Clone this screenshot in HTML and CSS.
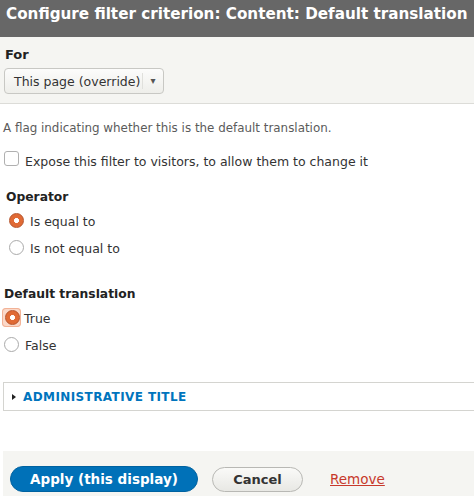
FILE: index.html
```html
<!DOCTYPE html>
<html>
<head>
<meta charset="utf-8">
<link rel="stylesheet" href="styles.css">
</head>
<body>
<div class="dialog">
  <div class="titlebar"><h1 class="title">Configure filter criterion: Content: Default translation</h1></div>
  <div class="override">
    <div class="label">For</div>
    <div class="select"><span class="select-text">This page (override)</span><span class="select-arrow">▾</span></div>
  </div>
  <div class="content">
    <p class="desc">A flag indicating whether this is the default translation.</p>
    <label class="check-row"><span class="checkbox"></span><span>Expose this filter to visitors, to allow them to change it</span></label>
    <div class="group op">
      <div class="label">Operator</div>
      <label class="radio-row"><span class="radio checked"></span><span>Is equal to</span></label>
      <label class="radio-row"><span class="radio"></span><span>Is not equal to</span></label>
    </div>
    <div class="group dt">
      <div class="label">Default translation</div>
      <label class="radio-row"><span class="focus"><span class="radio checked"></span></span><span>True</span></label>
      <label class="radio-row"><span class="radio"></span><span>False</span></label>
    </div>
    <div class="details"><span class="tri"></span><span class="summary">Administrative title</span></div>
  </div>
  <div class="footer">
    <span class="btn primary">Apply (this display)</span>
    <span class="btn cancel">Cancel</span>
    <a class="remove">Remove</a>
  </div>
</div>
</body>
</html>
```
FILE: styles.css
```css
html, body { margin: 0; padding: 0; background: #fff; }
body { font-family: "DejaVu Sans", sans-serif; color: #222330; font-size: 13px; width: 474px; height: 496px; overflow: hidden; }
.dialog { display: flex; flex-direction: column; height: 496px; }
.titlebar { background: #676767; height: 37px; padding: 0 0 0 6px; overflow: hidden; white-space: nowrap; }
.title { margin: 0; font-size: 15.2px; line-height: 28px; font-weight: bold; color: #fff; }
.override { background: #f5f5f2; border-bottom: 1px solid #dcdcd8; padding: 10px 0 9px 4px; height: 47px; box-sizing: content-box; }
.label { font-weight: bold; font-size: 12.3px; line-height: 16px; color: #222; padding-left: 1px; }
.override .label { font-size: 13px; }
.op .label { padding-left: 0; }
.select { margin-top: 5px; display: inline-flex; align-items: center; height: 24px; border: 1px solid #c8c8c4; border-radius: 4px; background: linear-gradient(#fcfcfb, #eeeeea); width: 158px; box-sizing: content-box; white-space: nowrap; }
.select-text { padding-left: 9px; font-size: 12.5px; color: #333; flex: 1; }
.select-arrow { width: 20px; border-left: 1px solid #e0e0dc; font-size: 10px; color: #555; text-align: center; line-height: 16px; }
.content { flex: 1; padding-left: 3px; }
.desc { margin: 16px 0 0 0; font-size: 11.9px; line-height: 16px; color: #5b5b5b; }
.check-row { display: flex; align-items: flex-end; margin-top: 15px; color: #333; font-size: 12.5px; line-height: 16px; }
.checkbox { width: 13px; height: 13px; border: 1px solid #b0b0b0; border-radius: 3px; background: #fff; margin: 0 6px 4px 1px; }
.op { margin-top: 19px; padding-left: 3px; }
.radio-row { display: flex; align-items: flex-end; font-size: 12.5px; line-height: 16px; color: #333; }
.op .radio-row { margin-top: 8px; padding-left: 3px; }
.op .radio-row + .radio-row { margin-top: 10px; }
.radio { width: 13px; height: 13px; border-radius: 50%; border: 1px solid #aaa; background: #fff; margin-right: 6px; margin-bottom: 2px; flex: none; }
.radio.checked { border: 1px solid #b6542c; background: radial-gradient(circle, #fff 0 2.2px, #e06a35 2.8px); }
.dt { margin-top: 29px; }
.dt .radio-row { margin-top: 6px; }
.dt .radio-row + .radio-row { margin-top: 10px; }
.dt .radio-row .radio { margin-left: 1px; }
.focus { display: inline-flex; align-items: center; justify-content: center; width: 19px; height: 19px; border-radius: 4px; background: #fbd8c8; box-shadow: inset 0 0 0 1px #f2b296; margin-left: -1px; margin-right: 3px; flex: none; }
.focus .radio { margin: 0; }
.details { margin-top: 28px; border: 1px solid #d4d4d0; border-right: none; height: 27px; display: flex; align-items: center; }
.tri { width: 0; height: 0; border-left: 4px solid #222; border-top: 3.5px solid transparent; border-bottom: 3.5px solid transparent; margin: 0 7px 0 8px; }
.summary { text-transform: uppercase; font-weight: bold; color: #0074bd; font-size: 12px; letter-spacing: 0.4px; }
.footer { background: #f5f5f2; margin-left: 3px; height: 45px; display: flex; align-items: flex-end; padding: 0 0 4px 7px; box-sizing: border-box; white-space: nowrap; }
.btn { display: inline-flex; align-items: center; justify-content: center; height: 25px; border-radius: 13px; border: 1px solid #b8b8b4; background: linear-gradient(#fafaf8, #e8e8e4); font-weight: bold; font-size: 13px; color: #333; margin-right: 14px; box-sizing: border-box; }
.btn.primary { background: #0071b8; border-color: #0062a0; color: #fff; width: 188px; height: 26px; font-size: 13.5px; }
.btn.cancel { width: 91px; }
.remove { color: #c7392b; text-decoration: underline; font-size: 13.5px; margin-left: 13px; align-self: center; margin-top: 14px; }
```
